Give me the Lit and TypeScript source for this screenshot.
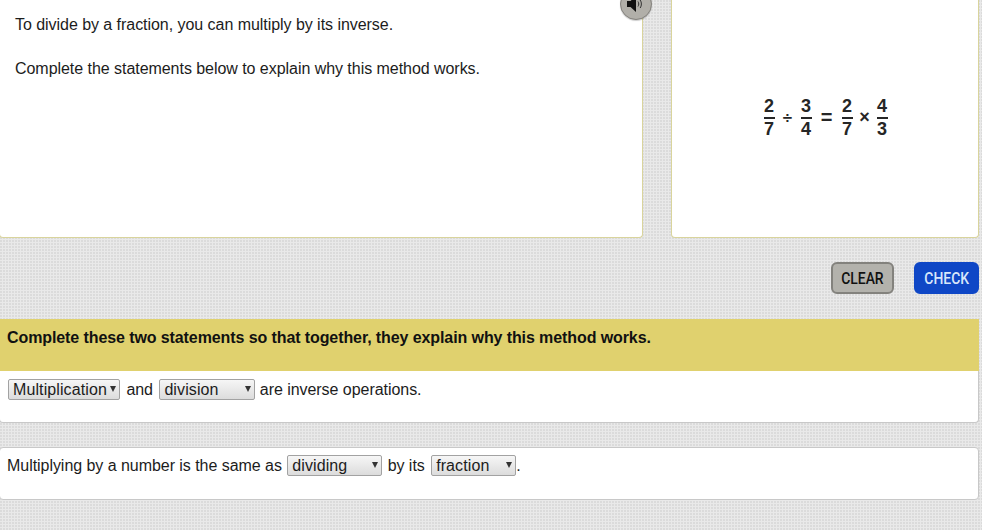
import { LitElement, html, css } from "lit";
import { customElement } from "lit/decorators.js";

const frac = (a: string, b: string) =>
  html`<span class="frac"><span class="num">${a}</span><span class="den">${b}</span></span>`;

@customElement("app-root")
export class AppRoot extends LitElement {
  static styles = css`
    :host {
      display: block;
      width: 982px;
      height: 530px;
      overflow: hidden;
      font-family: "Liberation Sans", Arial, sans-serif;
      font-size: 16px;
      letter-spacing: -0.045px;
      color: #1c1c1c;
      background-color: #e9e9e9;
      background-image: radial-gradient(circle at 1px 1px, #dbdbdb 0.8px, transparent 1px);
      background-size: 3px 3px;
    }
    .page {
      display: flex;
      flex-direction: column;
      width: 979px;
      height: 530px;
      position: relative;
    }
    .top {
      display: flex;
      gap: 28px;
      height: 238px;
      flex: none;
    }
    .panel {
      background: #fff;
      border: 1px solid #d9d49c;
      border-top: 0;
      box-sizing: border-box;
      border-radius: 0 0 4px 4px;
    }
    .left {
      width: 644px;
      margin-left: -1px;
      padding: 16px 15px 0 15px;
      position: relative;
    }
    .left p { margin: 0 0 26px; line-height: 18px; }
    .right {
      width: 308px;
      display: flex;
      align-items: center;
      justify-content: center;
      padding: 0 0 2px 1px;
    }
    .speaker {
      position: absolute;
      left: 620px;
      top: -12px;
      width: 32px;
      height: 32px;
      box-sizing: border-box;
      border-radius: 50%;
      background: #b1afa9;
      border: 1px solid #85837e;
      display: flex;
      align-items: center;
      justify-content: center;
      box-shadow: 0 1px 1px #0003;
    }
    .speaker svg { display: block; }
    .eq {
      display: flex;
      align-items: center;
      font-weight: 700;
      font-size: 18px;
      letter-spacing: 0;
      color: #262626;
    }
    .frac {
      display: inline-flex;
      flex-direction: column;
      align-items: center;
      width: 11px;
      line-height: 17px;
    }
    .num {
      border-bottom: 2px solid #262626;
      width: 100%;
      text-align: center;
      padding-bottom: 2px;
    }
    .den { padding-top: 2px; }
    .op { text-align: center; }
    .op1 { width: 26px; font-size: 17px; }
    .op2 { width: 30px; font-size: 20px; }
    .op3 { width: 24px; font-size: 18px; }
    .actions {
      display: flex;
      justify-content: flex-end;
      gap: 20px;
      padding-top: 24px;
      height: 57px;
      box-sizing: border-box;
      flex: none;
    }
    .btn {
      height: 32px;
      box-sizing: border-box;
      border-radius: 6px;
      font: 500 16px Roboto, "Liberation Sans", sans-serif;
      letter-spacing: 0;
      padding: 0;
      display: flex;
      align-items: center;
      justify-content: center;
    }
    .btn span { display: inline-block; transform: scaleX(0.87); }
    .clear {
      width: 63px;
      background: #b3b2ac;
      border: 2px solid #83827d;
      color: #111;
    }
    .check {
      width: 65px;
      background: #0f47c6;
      border: 2px solid #0f47c6;
      color: #d8e6fa;
    }
    .q1 {
      margin: 24px 0 0 -1px;
      background: #fff;
      border: 1px solid #c8c8c8;
      border-top: 0;
      border-radius: 0 0 4px 4px;
      height: 104px;
      box-sizing: border-box;
      flex: none;
    }
    .q1head {
      background: #e0d16e;
      height: 52px;
      box-sizing: border-box;
      padding: 10px 7px 0 8px;
      font-weight: 700;
      letter-spacing: -0.095px;
      line-height: 18px;
      color: #111;
      margin: 0 -1px;
    }
    .line {
      display: flex;
      align-items: center;
      white-space: pre;
      line-height: 18px;
    }
    .q1 .line { padding: 8px 8px 0 7px; height: 21px; }
    .q2 {
      margin: 24px 0 0 -1px;
      background: #fff;
      border: 1px solid #c8c8c8;
      border-radius: 4px;
      height: 53px;
      box-sizing: border-box;
      flex: none;
      padding: 7px 7px 0;
    }
    .q2 .line { height: 21px; }
    .word { margin: 0 1px; }
    .byits { margin-right: 1px; }
    .sel {
      position: relative;
      display: inline-block;
      height: 21px;
      flex: none;
      margin: 0 1px;
    }
    .sel.tight { margin-right: 0; }
    .sel select {
      appearance: none;
      -webkit-appearance: none;
      display: block;
      width: 100%;
      height: 21px;
      box-sizing: border-box;
      margin: 0;
      padding: 0 0 1px 4px;
      border: 1px solid #a2a2a2;
      border-radius: 2px;
      background: linear-gradient(#f6f6f6, #dcdcdc);
      font: 16px "Liberation Sans", Arial, sans-serif;
      letter-spacing: 0.1px;
      color: #1c1c1c;
    }
    .sel::after {
      content: "";
      position: absolute;
      right: 4px;
      top: 7px;
      border-left: 3px solid transparent;
      border-right: 3px solid transparent;
      border-top: 6px solid #333;
      pointer-events: none;
    }
    .w112 { width: 112px; }
    .w96 { width: 96px; }
    .w95 { width: 95px; }
    .w85 { width: 85px; }
  `;

  private sel(value: string, cls: string) {
    return html`<span class="sel ${cls}"><select aria-label=${value}><option>${value}</option></select></span>`;
  }

  render() {
    return html`
      <div class="page">
        <div class="top">
          <div class="panel left">
            <p>To divide by a fraction, you can multiply by its inverse.</p>
            <p>Complete the statements below to explain why this method works.</p>
            <div class="speaker">
              <svg width="20" height="18" viewBox="0 0 20 18">
                <path d="M1 6h3.500L10 1v16l-5.500-5H1z" fill="#111"/>
                <path d="M12 6.500c1 1.500 1 3.500 0 5M14.200 5c1.600 2.400 1.600 5.600 0 8" fill="none" stroke="#333" stroke-width="1"/>
              </svg>
            </div>
          </div>
          <div class="panel right">
            <div class="eq">
              ${frac("2", "7")}<span class="op op1">÷</span>${frac("3", "4")}<span class="op op2">=</span>${frac("2", "7")}<span class="op op3">×</span>${frac("4", "3")}
            </div>
          </div>
        </div>
        <div class="actions">
          <button class="btn clear"><span>CLEAR</span></button>
          <button class="btn check"><span>CHECK</span></button>
        </div>
        <div class="q1">
          <div class="q1head">Complete these two statements so that together, they explain why this method works.</div>
          <div class="line">${this.sel("Multiplication", "w112")}<span class="word"> and </span>${this.sel("division", "w96 tight")}<span> are inverse operations.</span></div>
        </div>
        <div class="q2">
          <div class="line"><span>Multiplying by a number is the same as </span>${this.sel("dividing", "w95")}<span class="byits"> by its </span>${this.sel("fraction", "w85 tight")}<span>.</span></div>
        </div>
      </div>
    `;
  }
}
